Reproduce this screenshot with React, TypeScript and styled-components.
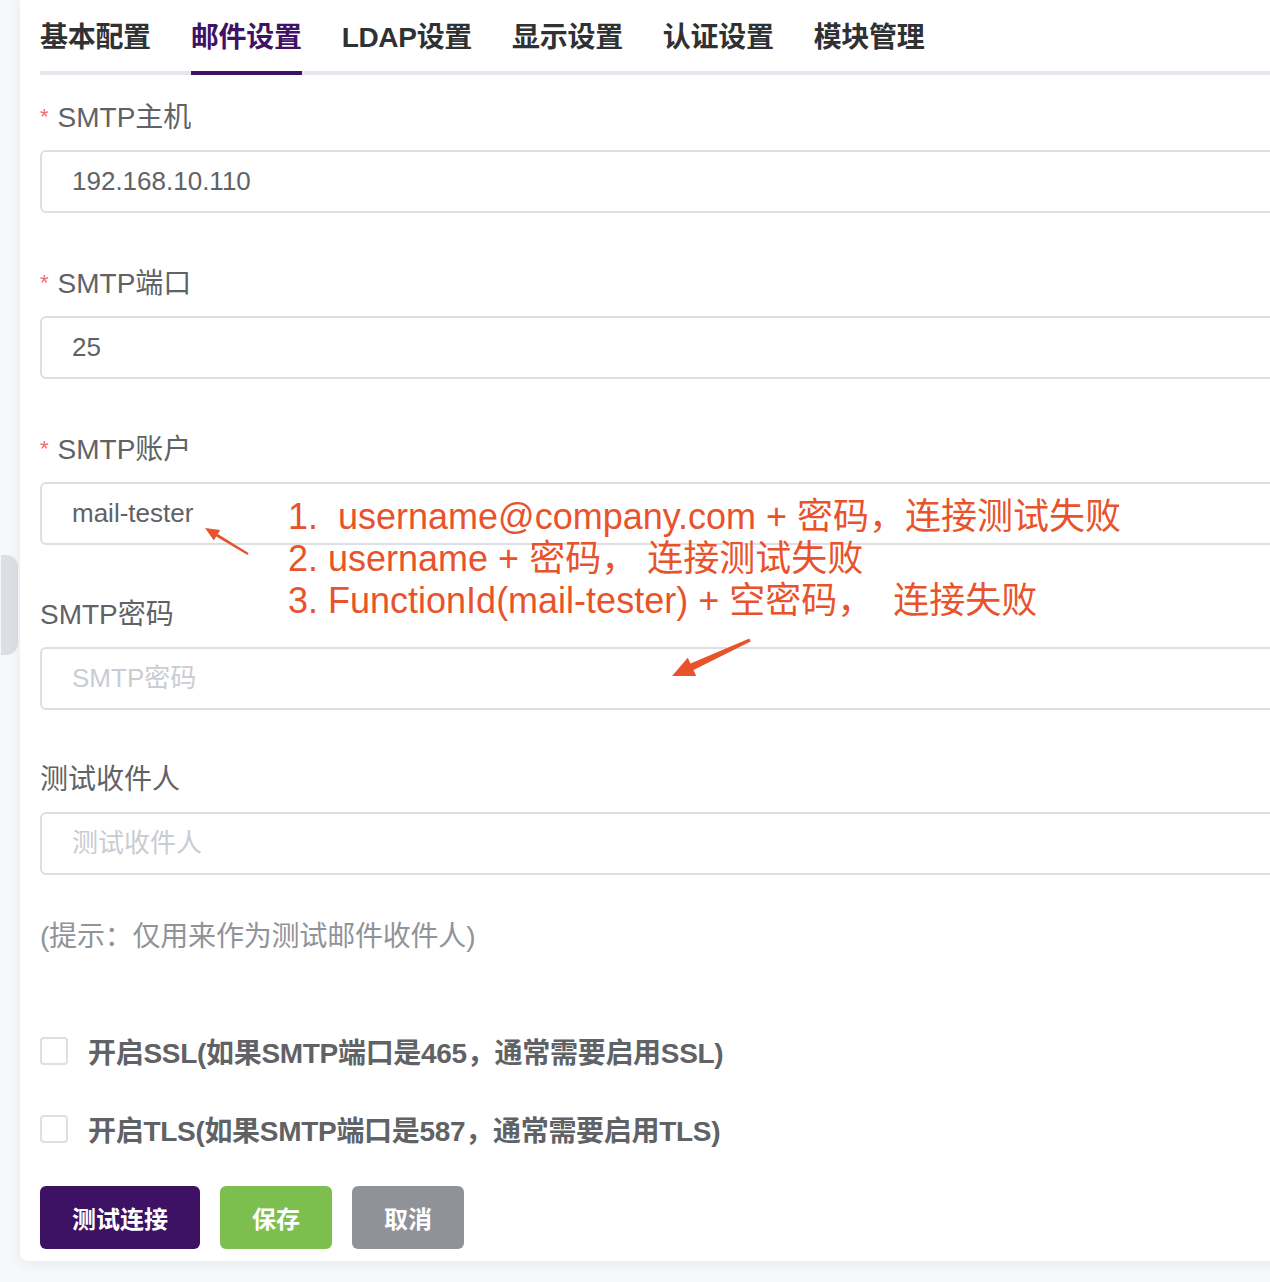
import React from "react";
import styled, { createGlobalStyle } from "styled-components";

const GlobalStyle = createGlobalStyle`
  html, body {
    margin: 0;
    padding: 0;
    background: #f7f8fa;
  }
  body {
    font-family: "Liberation Sans", Helvetica, Arial, "Noto Sans CJK SC", sans-serif;
  }
`;

const Page = styled.div`
  position: relative;
  display: flex;
  width: 1270px;
  height: 1282px;
  overflow: hidden;
  background: #f7f8fa;
`;

const Rail = styled.div`
  width: 20px;
  flex: none;
  padding-top: 555px;
  box-sizing: border-box;
`;

const Handle = styled.div`
  width: 17px;
  height: 100px;
  margin-left: 1px;
  background: #dcdfe6;
  border-radius: 0 12px 12px 0;
`;

const Card = styled.div`
  flex: none;
  width: 1300px;
  height: 1261px;
  box-sizing: border-box;
  padding: 17px 0 13px 20px;
  background: #fff;
  border-radius: 0 0 8px 8px;
  box-shadow: 0 2px 14px rgba(0, 0, 0, 0.07);
`;

const Tabs = styled.div`
  display: flex;
  gap: 40px;
  border-bottom: 4px solid #e4e7ed;
`;

const Tab = styled.div<{ $active?: boolean }>`
  font-size: 28px;
  font-weight: bold;
  line-height: 40px;
  padding-top: 1px;
  padding-bottom: 13px;
  margin-bottom: -4px;
  letter-spacing: -0.3px;
  color: ${p => (p.$active ? "#3f1266" : "#303133")};
  border-bottom: 4px solid ${p => (p.$active ? "#3f1266" : "transparent")};
`;

const Form = styled.div`
  padding-top: 22px;
`;

const Item = styled.div`
  margin-bottom: 50px;
`;

const Label = styled.div`
  font-size: 28px;
  line-height: 40px;
  color: #606266;
  margin-bottom: 12px;
`;

const Star = styled.span`
  color: #f56c6c;
  font-size: 22px;
  margin-right: 9px;
  vertical-align: 3px;
`;

const Input = styled.input`
  display: block;
  width: 100%;
  height: 63px;
  box-sizing: border-box;
  padding: 0 30px;
  border: 2px solid #dcdfe6;
  border-radius: 6px;
  font-family: inherit;
  font-size: 26px;
  color: #606266;
  outline: none;
  &::placeholder {
    color: #c9ccd2;
  }
`;

const Hint = styled.div`
  margin-top: -8px;
  font-size: 28px;
  line-height: 40px;
  color: #909399;
  letter-spacing: -0.2px;
`;

const Checks = styled.div`
  display: flex;
  flex-direction: column;
  gap: 38px;
  margin-top: 74px;
`;

const CheckRow = styled.label`
  display: flex;
  align-items: center;
  gap: 20px;
  height: 40px;
  font-size: 28px;
  font-weight: bold;
  color: #606266;
  letter-spacing: -0.3px;
`;

const Box = styled.span`
  width: 28px;
  height: 28px;
  box-sizing: border-box;
  border: 2px solid #dcdfe6;
  border-radius: 4px;
  background: #fff;
`;

const Buttons = styled.div`
  display: flex;
  gap: 20px;
  margin-top: 37px;
`;

const Button = styled.button<{ $color: string }>`
  height: 63px;
  padding: 0 32px;
  border: none;
  border-radius: 6px;
  background: ${p => p.$color};
  color: #fff;
  font-family: inherit;
  font-size: 24px;
  font-weight: bold;
`;

const Note = styled.div`
  position: absolute;
  left: 288px;
  top: 496px;
  color: #e8532b;
  font-size: 36px;
  line-height: 42px;
  white-space: pre;
  pointer-events: none;
`;

const Arrows = styled.svg`
  position: absolute;
  left: 0;
  top: 0;
  pointer-events: none;
`;

const fields = [
  { label: "SMTP主机", required: true, value: "192.168.10.110", placeholder: "" },
  { label: "SMTP端口", required: true, value: "25", placeholder: "" },
  { label: "SMTP账户", required: true, value: "mail-tester", placeholder: "" },
  { label: "SMTP密码", required: false, value: "", placeholder: "SMTP密码" },
  { label: "测试收件人", required: false, value: "", placeholder: "测试收件人" }
];

const tabs = ["基本配置", "邮件设置", "LDAP设置", "显示设置", "认证设置", "模块管理"];

export default function App() {
  return (
    <>
      <GlobalStyle />
      <Page>
        <Rail>
          <Handle />
        </Rail>
        <Card>
          <Tabs>
            {tabs.map(t => (
              <Tab key={t} $active={t === "邮件设置"}>
                {t}
              </Tab>
            ))}
          </Tabs>
          <Form>
            {fields.map(f => (
              <Item key={f.label}>
                <Label>
                  {f.required && <Star>*</Star>}
                  {f.label}
                </Label>
                <Input
                  defaultValue={f.value}
                  placeholder={f.placeholder}
                  readOnly
                />
              </Item>
            ))}
            <Hint>(提示：仅用来作为测试邮件收件人)</Hint>
            <Checks>
              <CheckRow>
                <Box />
                开启SSL(如果SMTP端口是465，通常需要启用SSL)
              </CheckRow>
              <CheckRow>
                <Box />
                开启TLS(如果SMTP端口是587，通常需要启用TLS)
              </CheckRow>
            </Checks>
            <Buttons>
              <Button $color="#3d1163">测试连接</Button>
              <Button $color="#7cbf4e">保存</Button>
              <Button $color="#8f9297">取消</Button>
            </Buttons>
          </Form>
        </Card>
        <Note>
          {"1.  username@company.com + 密码，连接测试失败\n2. username + 密码， 连接测试失败\n3. FunctionId(mail-tester) + 空密码，  连接失败"}
        </Note>
        <Arrows width="1270" height="1282" viewBox="0 0 1270 1282">
          <polygon
            fill="#e8532b"
            points="248.5,553.1 217.8,534 220.2,530.1 205,528 213.9,540.4 216.2,536.6 247.5,554.9"
          />
          <polygon
            fill="#e8532b"
            points="749.4,638.6 690.5,663.6 687.8,657.7 672,676 696.2,675.9 693.5,670 750.6,641.4"
          />
        </Arrows>
      </Page>
    </>
  );
}
